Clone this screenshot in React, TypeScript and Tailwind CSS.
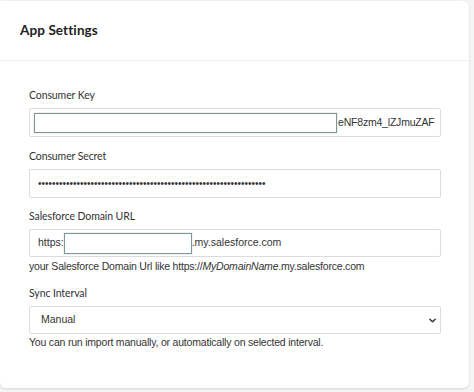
import React from 'react';

const sans = { fontFamily: '"Liberation Sans", Arial, sans-serif' };

function Label({ children }: { children: React.ReactNode }) {
  return (
    <div className="text-[10.5px] leading-[16px] text-[#333] mb-[5px] font-['Lato',sans-serif] tracking-[-0.1px]">
      {children}
    </div>
  );
}

function Redact({ className }: { className: string }) {
  return (
    <span
      className={`inline-block shrink-0 bg-white border border-[#7f9797] shadow-[0_0_1px_rgba(0,0,0,0.3)] ${className}`}
    />
  );
}

export default function App() {
  const dots = '•'.repeat(65);

  return (
    <div className="w-[474px] h-[392px] bg-[#f5f5f5] overflow-hidden" style={sans}>
      <div className="w-[469px] h-[387px] mt-[1px] bg-white rounded-r-[6px] rounded-bl-[6px] shadow-[0_1px_3px_rgba(0,0,0,0.12)] flex flex-col">
        {/* Header */}
        <div className="h-[60px] flex items-center pl-[20px] border-b border-[#efefef]">
          <h1 className="text-[13.5px] font-bold text-[#222] font-['Lato',sans-serif] tracking-[0.1px]">
            App Settings
          </h1>
        </div>

        {/* Form */}
        <div className="pl-[29px] pr-[28px] pt-[26px] flex flex-col">
          <Label>Consumer Key</Label>
          <div className="h-[29px] border border-[#dcdcdc] rounded-[2px] flex items-center pl-[4px] text-[10.5px] text-[#333] overflow-hidden whitespace-nowrap tracking-[-0.2px]">
            <Redact className="w-[303px] h-[20px]" />
            <span className="pl-[1px]">eNF8zm4_lZJmuZAF</span>
          </div>

          <div className="mt-[11px]">
            <Label>Consumer Secret</Label>
          </div>
          <div className="h-[29px] border border-[#dcdcdc] rounded-[2px] flex items-center pl-[8px] text-[10px] text-[#333] leading-none">
            {dots}
          </div>

          <div className="mt-[10px]">
            <Label>Salesforce Domain URL</Label>
          </div>
          <div className="h-[28px] border border-[#dcdcdc] rounded-[2px] flex items-center pl-[8px] text-[10.5px] text-[#333]">
            <span>https:</span>
            <Redact className="w-[128px] h-[21px]" />
            <span>.my.salesforce.com</span>
          </div>
          <div className="text-[10.5px] leading-[16px] text-[#333] mt-[1px] tracking-[-0.2px]">
            your Salesforce Domain Url like https://<i>MyDomainName</i>.my.salesforce.com
          </div>

          <div className="mt-[11px]">
            <Label>Sync Interval</Label>
          </div>
          <div className="h-[28px] border border-[#dcdcdc] rounded-[2px] flex items-center justify-between pl-[11px] pr-[3px] text-[10.5px] text-[#333]">
            <span>Manual</span>
            <svg width="9" height="9" viewBox="0 0 10 10" fill="none">
              <path d="M2 3.5 L5 6.5 L8 3.5" stroke="#333" strokeWidth="1.6" strokeLinecap="round" strokeLinejoin="round" />
            </svg>
          </div>
          <div className="text-[10.5px] leading-[16px] text-[#333] tracking-[-0.2px]">
            You can run import manually, or automatically on selected interval.
          </div>
        </div>
      </div>
    </div>
  );
}
